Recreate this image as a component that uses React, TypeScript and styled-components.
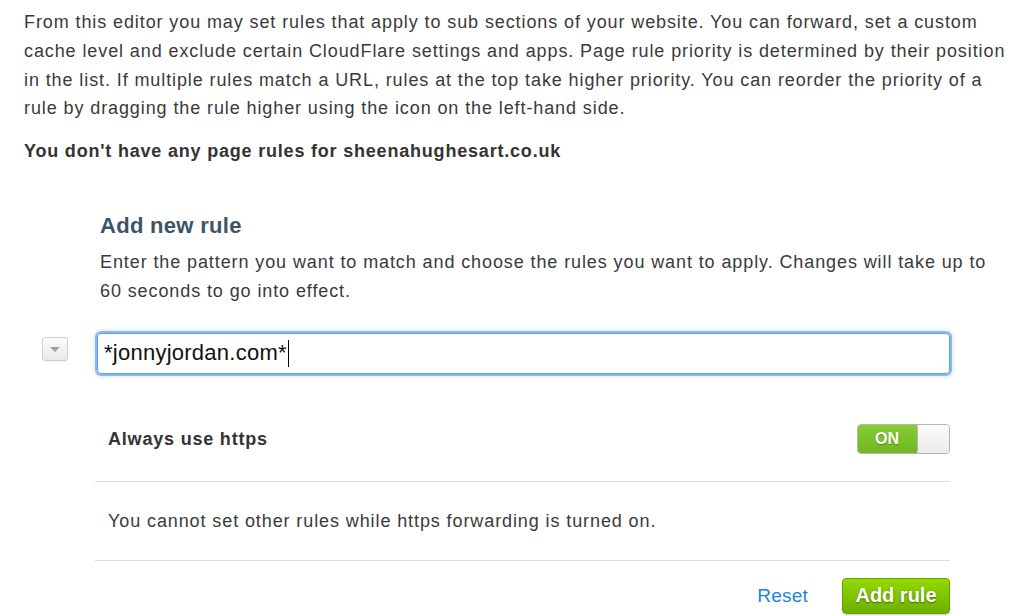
import React from "react";
import styled, { createGlobalStyle } from "styled-components";

const Global = createGlobalStyle`
  html, body { margin: 0; padding: 0; background: #fff; }
  body { font-family: "Liberation Sans", Arial, Helvetica, sans-serif; color: #333; }
  * { box-sizing: border-box; }
`;

const Page = styled.div`
  width: 1024px;
  height: 616px;
  overflow: hidden;
  padding: 8px 0 0 24px;
`;

const Intro = styled.p`
  margin: 0;
  font-size: 18px;
  line-height: 28.8px;
  letter-spacing: 0.9px;
  color: #3a3a3a;
  white-space: nowrap;
`;

const Notice = styled.p`
  margin: 14px 0 0;
  font-size: 18px;
  line-height: 28.8px;
  letter-spacing: 0.8px;
  font-weight: bold;
  color: #333;
`;

const Section = styled.section`
  margin: 45px 0 0 18px;
  width: 908px;
`;

const Head = styled.div`
  padding-left: 58px;
`;

const Title = styled.h2`
  margin: 0;
  font-size: 22px;
  line-height: 30px;
  letter-spacing: 0.3px;
  font-weight: bold;
  color: #3b5468;
`;

const Lead = styled.p`
  margin: 7px 0 0;
  font-size: 18px;
  line-height: 28.8px;
  letter-spacing: 0.9px;
  color: #3a3a3a;
  white-space: nowrap;
`;

const InputRow = styled.div`
  margin-top: 27px;
  display: flex;
  align-items: center;
  gap: 29px;
`;

const DropButton = styled.button`
  width: 26px;
  height: 24px;
  padding: 0;
  margin-bottom: 8px;
  border: 1px solid #cfcfcf;
  border-radius: 3px;
  background: linear-gradient(#fbfbfb, #e9e9e9);
  box-shadow: 0 1px 1px rgba(0, 0, 0, 0.06);
  display: flex;
  align-items: center;
  justify-content: center;
  flex-shrink: 0;
`;

const Triangle = styled.span`
  width: 0;
  height: 0;
  border-left: 5px solid transparent;
  border-right: 5px solid transparent;
  border-top: 5px solid #a0a0a0;
`;

const Field = styled.div`
  flex: 1;
  height: 41px;
  border: 1px solid #5a9ef0;
  border-radius: 4px;
  box-shadow: 0 0 0 2px rgba(110, 168, 242, 0.75), 0 0 4px 2px rgba(110, 168, 242, 0.4);
  display: flex;
  align-items: center;
  padding-left: 6px;
  font-size: 22px;
  letter-spacing: 0.25px;
  color: #111;
`;

const Caret = styled.span`
  display: inline-block;
  width: 1px;
  height: 27px;
  background: #000;
  margin-left: 1px;
`;

const Rows = styled.div`
  margin: 23px 0 0 53px;
`;

const Row = styled.div<{ $pad: number }>`
  display: flex;
  align-items: center;
  justify-content: space-between;
  padding: ${(p) => p.$pad}px 0 ${(p) => p.$pad}px 13px;
  border-bottom: 1px solid #dcdcdc;
`;

const RowLabel = styled.span`
  font-size: 18px;
  line-height: 28px;
  letter-spacing: 0.8px;
  font-weight: bold;
  color: #333;
`;

const RowText = styled.span`
  font-size: 18px;
  line-height: 28px;
  letter-spacing: 0.9px;
  color: #3a3a3a;
`;

const Toggle = styled.div`
  width: 93px;
  height: 30px;
  display: flex;
  border-radius: 4px;
  overflow: hidden;
  border: 1px solid #b5b5b5;
`;

const ToggleOn = styled.div`
  width: 60px;
  background: linear-gradient(#86cc32, #6fb722);
  color: #fff;
  font-weight: bold;
  font-size: 16px;
  display: flex;
  align-items: center;
  justify-content: center;
  text-shadow: 0 1px 1px rgba(0, 0, 0, 0.35);
  margin: -1px 0 -1px -1px;
`;

const Knob = styled.div`
  flex: 1;
  background: linear-gradient(#fbfbfb, #ececec);
  border-left: 1px solid #b5b5b5;
  border-radius: 3px;
`;

const Footer = styled.div`
  margin-top: 17px;
  display: flex;
  justify-content: flex-end;
  align-items: center;
  gap: 34px;
`;

const ResetLink = styled.a`
  font-size: 19px;
  letter-spacing: 0.2px;
  color: #1b86dc;
  text-decoration: none;
`;

const AddButton = styled.button`
  height: 36px;
  width: 108px;
  padding: 0;
  border: 1px solid #66a400;
  border-radius: 4px;
  background: linear-gradient(#94d900, #6cb000);
  color: #fff;
  font-family: "Liberation Sans", Arial, sans-serif;
  font-weight: bold;
  font-size: 20px;
  text-shadow: 0 1px 2px rgba(0, 0, 0, 0.45);
  box-shadow: 0 1px 2px rgba(0, 0, 0, 0.2);
`;

export default function App() {
  return (
    <>
      <Global />
      <Page>
        <Intro>
          From this editor you may set rules that apply to sub sections of your website. You can forward, set a custom
          <br />
          cache level and exclude certain CloudFlare settings and apps. Page rule priority is determined by their position
          <br />
          in the list. If multiple rules match a URL, rules at the top take higher priority. You can reorder the priority of a
          <br />
          rule by dragging the rule higher using the icon on the left-hand side.
        </Intro>
        <Notice>You don't have any page rules for sheenahughesart.co.uk</Notice>
        <Section>
          <Head>
            <Title>Add new rule</Title>
            <Lead>
              Enter the pattern you want to match and choose the rules you want to apply. Changes will take up to
              <br />
              60 seconds to go into effect.
            </Lead>
          </Head>
          <InputRow>
            <DropButton aria-label="move">
              <Triangle />
            </DropButton>
            <Field>
              *jonnyjordan.com*
              <Caret />
            </Field>
          </InputRow>
          <Rows>
            <Row $pad={27}>
              <RowLabel>Always use https</RowLabel>
              <Toggle>
                <ToggleOn>ON</ToggleOn>
                <Knob />
              </Toggle>
            </Row>
            <Row $pad={25}>
              <RowText>You cannot set other rules while https forwarding is turned on.</RowText>
            </Row>
            <Footer>
              <ResetLink href="#">Reset</ResetLink>
              <AddButton>Add rule</AddButton>
            </Footer>
          </Rows>
        </Section>
      </Page>
    </>
  );
}
